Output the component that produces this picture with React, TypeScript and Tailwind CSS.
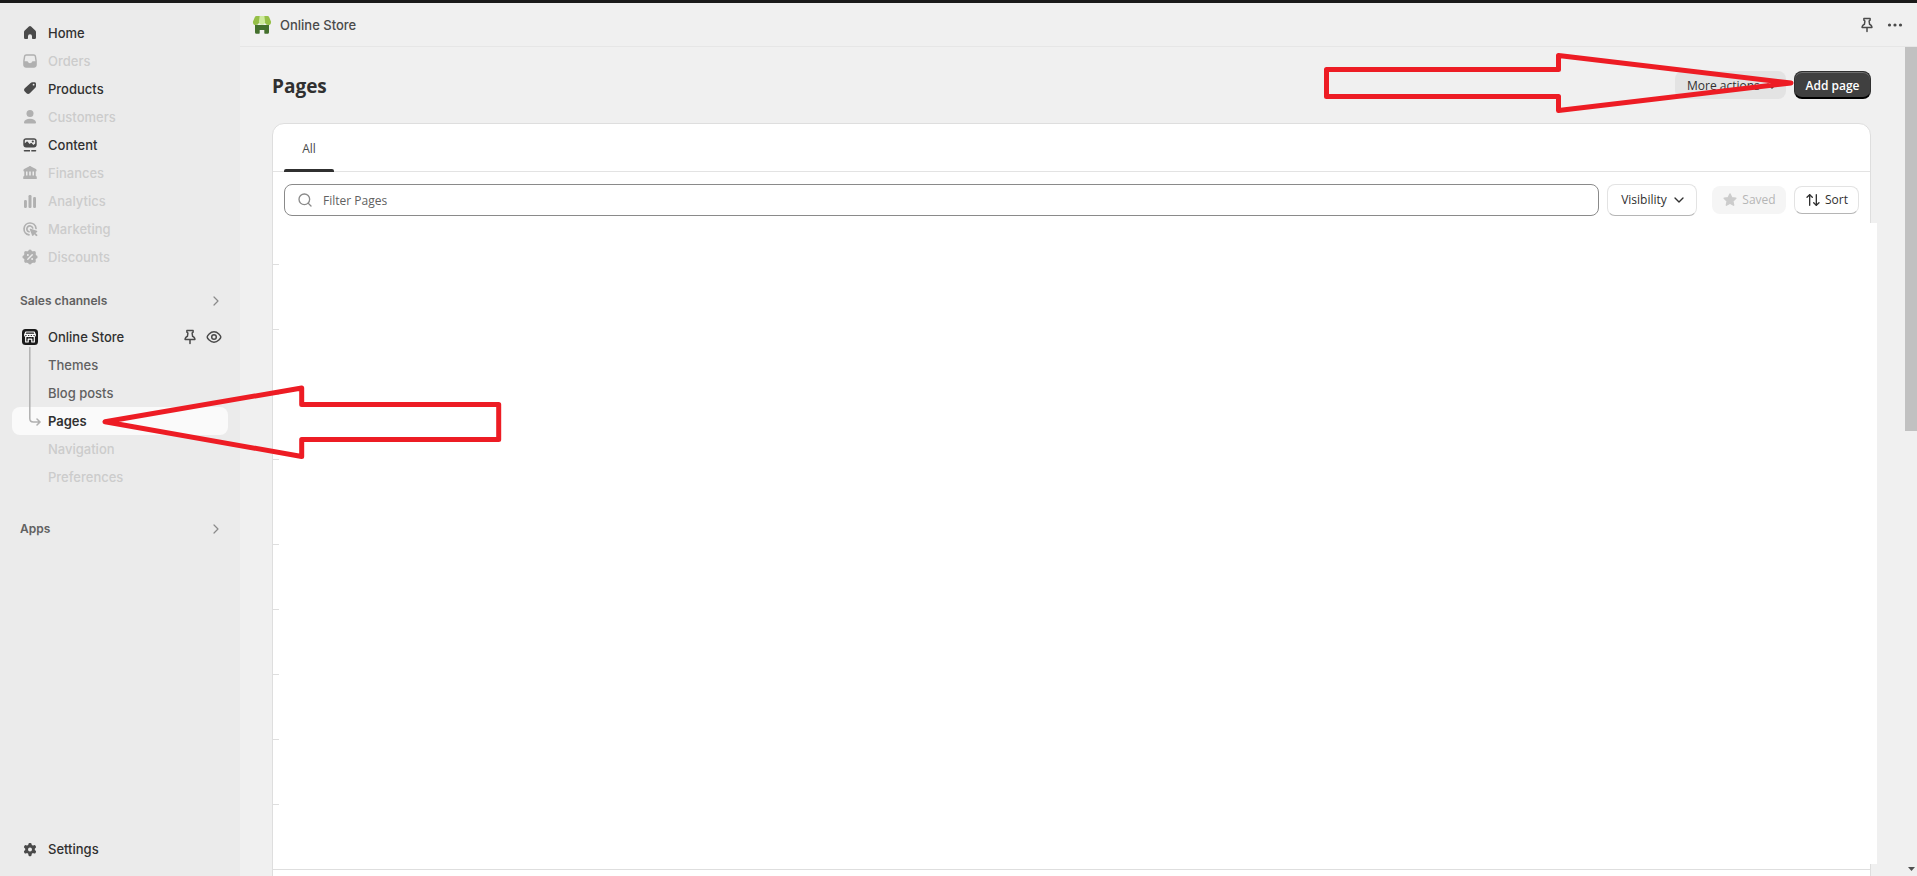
import type { ReactNode } from 'react'
import { ArrowDownUp, ChevronDown, ChevronRight, Search } from 'lucide-react'

interface NavItem {
  label: string
  icon: ReactNode
  disabled?: boolean
}

function Icon({ children, className = '' }: { children: ReactNode; className?: string }) {
  return (
    <svg viewBox="0 0 20 20" width="20" height="20" fill="currentColor" className={`shrink-0 ${className}`} aria-hidden="true">
      {children}
    </svg>
  )
}

function PinIcon() {
  return (
    <Icon>
      <g fill="none" stroke="currentColor" strokeWidth="1.5" strokeLinecap="round" strokeLinejoin="round">
        <path d="M6.9 3.6h6.2v1.6l-1 .8.5 3.4c1.5.5 2.3 1.5 2.3 3.1H5.1c0-1.600.8-2.600 2.300-3.100l.5-3.400-1-.8z" />
        <path d="M10 12.800v3.700" />
      </g>
    </Icon>
  )
}

const principal: NavItem[] = [
  {
    label: 'Home',
    icon: <path d="M8.9 3.500a1.600 1.600 0 0 1 2.200 0l4.200 3.900c.5.500.7 1 .7 1.600v5.400c0 1-.7 1.700-1.700 1.700h-1.500c-.5 0-.8-.3-.8-.8v-2a2 2 0 0 0-4 0v2c0 .5-.3.8-.8.8H5.700c-1 0-1.700-.7-1.700-1.700V9c0-.6.200-1.100.7-1.600z" />,
  },
  {
    label: 'Orders',
    disabled: true,
    icon: (
      <path
        fillRule="evenodd"
        d="M6.300 3.300h7.400c1.300 0 2.200.8 2.400 2l.7 4.500v4c0 1.700-1.100 2.900-2.900 2.900H6.100c-1.800 0-2.900-1.200-2.900-2.900v-4l.7-4.500c.2-1.200 1.100-2 2.400-2zm0 1.500c-.6 0-.9.3-1 .8l-.7 4.600h2.500c.6 0 .9.3 1.100.8.3.800.8 1.200 1.800 1.200s1.500-.4 1.800-1.200c.2-.5.5-.8 1.100-.8h2.500l-.7-4.600c-.1-.5-.4-.8-1-.8z"
      />
    ),
  },
  {
    label: 'Products',
    icon: (
      <path
        fillRule="evenodd"
        d="M10.600 4c.5-.5 1-.7 1.700-.7h2.200c.9 0 1.500.6 1.500 1.500V7c0 .7-.2 1.200-.7 1.700l-5.500 5.600c-1 1-2.300 1-3.300 0l-1.700-1.700c-1-1-1-2.300 0-3.300zM13.600 6.600a.9.9 0 1 0 0-1.800.9.9 0 0 0 0 1.800z"
      />
    ),
  },
  {
    label: 'Customers',
    disabled: true,
    icon: (
      <>
        <circle cx="10" cy="6.500" r="3.500" />
        <path d="M4 15.200C4.300 13 6.800 11.800 10 11.800s5.700 1.200 6 3.400c.1.800-.4 1.400-1.200 1.400H5.200c-.8 0-1.300-.6-1.200-1.400z" />
      </>
    ),
  },
  {
    label: 'Content',
    icon: (
      <>
        <path
          fillRule="evenodd"
          d="M6 3.200h8c1.600 0 2.700 1.100 2.700 2.600v4c0 1.600-1.100 2.700-2.700 2.700H6c-1.600 0-2.700-1.100-2.700-2.700v-4c0-1.500 1.100-2.600 2.700-2.600zm0 1.500c-.7 0-1.200.5-1.200 1.200v2.300l1.500-1.300c.5-.4 1.100-.4 1.600.1L9.600 9l.9-.7c.5-.4 1.100-.3 1.500.1l1.400 1.500 1.800-1.300V5.900c0-.7-.5-1.200-1.200-1.200z"
        />
        <circle cx="12.800" cy="6.500" r="1.100" />
        <path d="M4.500 15h5.500v1.600H4.500a.7.7 0 0 1 0-1.600zM11.300 15h4.200a.7.7 0 0 1 0 1.600h-4.200z" />
      </>
    ),
  },
  {
    label: 'Finances',
    disabled: true,
    icon: (
      <path
        fillRule="evenodd"
        d="M9 3.400c.7-.4 1.300-.4 2 0l4.900 2.500c.9.500 1 2.300-.2 2.600v4.200c.8.300 1.100 1 1.100 1.900v.8c0 .4-.3.700-.7.700H3.900c-.4 0-.7-.3-.7-.7v-.8c0-.9.300-1.600 1.100-1.900V8.500c-1.200-.3-1.100-2.100-.2-2.600zM6 8.500v4h1.500v-4zm3.200 0v4h1.600v-4zm3.300 0v4H14v-4z"
      />
    ),
  },
  {
    label: 'Analytics',
    disabled: true,
    icon: (
      <>
        <rect x="4" y="9" width="2.900" height="8" rx="1.200" />
        <rect x="8.500" y="4" width="3" height="13" rx="1.200" />
        <rect x="13.100" y="6" width="2.900" height="11" rx="1.200" />
      </>
    ),
  },
  {
    label: 'Marketing',
    disabled: true,
    icon: (
      <>
        <g fill="none" stroke="currentColor" strokeWidth="1.700" strokeLinecap="round">
          <path d="M16 9.300A6 6 0 1 0 9 15.900" />
          <path d="M12.700 9A3 3 0 1 0 9 12.800" />
        </g>
        <path d="M9.800 10.600c-.2-.6.300-1.100.9-.9l6 2c.8.300.8 1.200.1 1.500l-1.300.7 1.800 1.800c.6.600-.7 1.900-1.300 1.300l-1.800-1.800-.7 1.200c-.4.700-1.300.6-1.500-.1z" />
      </>
    ),
  },
  {
    label: 'Discounts',
    disabled: true,
    icon: (
      <>
        {/* eight rounded lobes around the percent sign */}
        <circle cx="10" cy="10" r="6.300" />
        <circle cx="10" cy="4.200" r="1.800" />
        <circle cx="14.100" cy="5.900" r="1.800" />
        <circle cx="15.800" cy="10" r="1.800" />
        <circle cx="14.100" cy="14.100" r="1.800" />
        <circle cx="10" cy="15.800" r="1.800" />
        <circle cx="5.900" cy="14.100" r="1.800" />
        <circle cx="4.200" cy="10" r="1.800" />
        <circle cx="5.900" cy="5.900" r="1.800" />
        <path d="M7.800 12.200l4.400-4.400" stroke="#ebebeb" strokeWidth="1.400" strokeLinecap="round" />
        <circle cx="7.900" cy="8.100" r="1" fill="#ebebeb" />
        <circle cx="12.100" cy="11.900" r="1" fill="#ebebeb" />
      </>
    ),
  },
]

const subPages = [
  { label: 'Themes', style: 'text-[#616161]' },
  { label: 'Blog posts', style: 'text-[#616161]' },
  { label: 'Pages', style: 'bg-[#fafafa] font-semibold text-[#303030]', current: true },
  { label: 'Navigation', style: 'text-[#cccccc]' },
  { label: 'Preferences', style: 'text-[#cccccc]' },
]

const rowHeights = ['h-[42px]', 'h-[65px]', 'h-[65px]', 'h-[65px]', 'h-[85px]', 'h-[65px]', 'h-[65px]', 'h-[65px]', 'h-[65px]', 'h-[65px]', 'h-[65px]']

function SectionHeading({ children }: { children: ReactNode }) {
  return (
    <button className="flex h-7 w-full items-center justify-between pr-1 pl-2 text-xs font-semibold text-[#616161]">
      {children}
      <ChevronRight size={16} strokeWidth={1.8} className="text-[#8a8a8a]" />
    </button>
  )
}

function Sidebar() {
  return (
    <nav className="flex w-60 shrink-0 flex-col bg-[#ebebeb] px-3 pt-4 pb-3 text-[13px] font-[450] text-[#303030]">
      <ul>
        {principal.map((item) => (
          <li key={item.label}>
            <a
              href="#"
              className={`flex h-7 items-center gap-2 pl-2 ${item.disabled ? 'font-medium text-[#cccccc]' : ''}`}
            >
              <Icon className={item.disabled ? 'text-[#b0b0b0]' : 'text-[#4a4a4a]'}>{item.icon}</Icon>
              <span className="pt-0.5">{item.label}</span>
            </a>
          </li>
        ))}
      </ul>

      <div className="mt-4 mb-2">
        <SectionHeading>Sales channels</SectionHeading>
      </div>

      <div className="relative">
        <div className="flex h-7 items-center gap-1 pr-1 pl-2">
          <a href="#" className="flex flex-1 items-center gap-2">
            <Icon>
              <rect x="2" y="2" width="16" height="16" rx="3.500" fill="#1a1a1a" />
              <g fill="none" stroke="#fff" strokeWidth="1.200" strokeLinejoin="round">
                <path d="M5.800 5h8.400l1.200 3c0 2-2.600 2-2.700.2 0 1.900-2.700 1.900-2.700 0 0 1.900-2.700 1.900-2.700 0C7.200 10 4.600 10 4.600 8z" />
                <path d="M4.800 7.400h10.400M5.700 10v5h2.500v-2.800h3.600V15h2.500v-5" />
              </g>
            </Icon>
            <span className="pt-0.5">Online Store</span>
          </a>
          <button aria-label="Unpin" className="text-[#4a4a4a]"><PinIcon /></button>
          <button aria-label="View your online store" className="text-[#4a4a4a]">
            <Icon>
              <g fill="none" stroke="currentColor" strokeWidth="1.500">
                <path d="M3.200 10c0-1.200 2.900-5.200 6.800-5.200s6.800 4 6.800 5.200-2.900 5.200-6.800 5.200S3.200 11.200 3.200 10z" />
                <circle cx="10" cy="10" r="2.300" />
              </g>
            </Icon>
          </button>
        </div>
        <ul>
          {subPages.map((page) => (
            <li key={page.label}>
              <a href="#" aria-current={page.current ? 'page' : undefined} className={`flex h-7 items-center rounded-lg pl-9 ${page.style}`}>
                <span className="pt-0.5">{page.label}</span>
              </a>
            </li>
          ))}
        </ul>
        {/* branch from the channel icon down to the current page */}
        <svg width="14" height="82" viewBox="0 0 14 82" fill="none" stroke="#b0b0b0" strokeWidth="1.500" strokeLinecap="round" className="absolute top-6 left-4" aria-hidden="true">
          <path d="M1.800 0v71.500q0 3.500 3.500 3.500h6.500M9 72l3 3-3 3" />
        </svg>
      </div>

      <div className="mt-6">
        <SectionHeading>Apps</SectionHeading>
      </div>

      <a href="#" className="mt-auto flex h-7 items-center gap-2 pl-2">
        <Icon className="text-[#4a4a4a]">
          <path
            fillRule="evenodd"
            d="M8.500 3.800c.1-.6.500-.9 1.100-.9h.8c.6 0 1 .3 1.100.9l.3 1.100 1.100.7 1.200-.4c.6-.2 1.100 0 1.400.5l.4.700c.3.500.2 1-.2 1.400l-.9.900v1.200l.9.900c.4.400.5.900.2 1.400l-.4.700c-.3.500-.8.700-1.400.5l-1.200-.4-1.100.7-.3 1.600c-.1.600-.5.900-1.100.9h-.8c-.6 0-1-.3-1.100-.9l-.3-1.600-1.100-.7-1.200.4c-.6.200-1.100 0-1.400-.5l-.4-.7c-.3-.5-.2-1 .2-1.400l.9-.9V8.700l-.9-.9c-.4-.4-.5-.9-.2-1.400l.4-.7c.3-.5.8-.7 1.400-.5l1.200.4 1.100-.7zM10 11.400a2 2 0 1 0 0-4 2 2 0 0 0 0 4z"
          />
        </Icon>
        <span>Settings</span>
      </a>
    </nav>
  )
}

function TopBar() {
  return (
    <header className="flex h-11 shrink-0 items-center gap-2 border-b border-[#e6e6e6] px-3 font-[450]">
      <Icon>
        <path d="M3 10h14v7.300c0 .9-.5 1.500-1.400 1.500h-2.300c-.7 0-1-.3-1-1V15H7.700v2.800c0 .7-.3 1-1 1H4.400c-.9 0-1.400-.6-1.400-1.500z" fill="#44702d" />
        <path d="M4.500 1h11c.8 0 1.400.4 1.700 1.200L19 6.600c.3 2.300-1 3.500-2.800 3.500-1.600 0-2.700-.8-3-2H6.800c-.3 1.200-1.400 2-3 2C2 10.100.7 8.900 1 6.600l1.800-4.400C3.100 1.400 3.700 1 4.500 1z" fill="#95bf47" />
        <path d="M7.600 1h4.800l.7 5.800c0 2-1.300 3-3.100 3s-3.100-1-3.100-3z" fill="#cdea9c" />
      </Icon>
      <span className="pt-0.5 text-[13px] text-[#4a4a4a]">Online Store</span>
      <button aria-label="Pin" className="ml-auto text-[#4a4a4a]"><PinIcon /></button>
      <button aria-label="More" className="text-[#4a4a4a]">
        <Icon>
          <circle cx="4.500" cy="10" r="1.600" />
          <circle cx="10" cy="10" r="1.600" />
          <circle cx="15.500" cy="10" r="1.600" />
        </Icon>
      </button>
    </header>
  )
}

function PagesCard() {
  return (
    <section className="relative rounded-t-xl border border-[#dedede] bg-white">
      <div role="tablist" className="flex h-12 border-b border-[#e3e3e3] px-[11px]">
        <button role="tab" aria-selected="true" className="relative w-[50px] pt-0.5 text-xs font-medium text-[#4a4a4a]">
          All
          <span className="absolute inset-x-0 -bottom-px h-[3px] rounded-t-xs bg-[#303030]" />
        </button>
      </div>

      <div className="flex items-center gap-2 px-[11px] pt-3 pb-[7px]">
        <label className="flex h-8 flex-1 items-center gap-2.5 rounded-lg border border-[#8a8a8a] px-3">
          <Search size={16} strokeWidth={2} className="text-[#8a8a8a]" />
          <input type="text" aria-label="Filter Pages" placeholder="Filter Pages" className="h-7 flex-1 text-xs outline-none placeholder:text-[#616161]" />
        </label>
        <button className="flex h-8 w-[90px] items-center justify-center gap-1 rounded-lg border border-[#e3e3e3] border-b-[#b5b5b5] pl-1 text-xs">
          Visibility
          <ChevronDown size={16} />
        </button>
        <button disabled className="ml-[7px] flex h-7 w-[74px] items-center justify-center gap-1 rounded-lg bg-[#f5f5f5] text-xs text-[#b5b5b5]">
          <svg width="16" height="16" viewBox="0 0 16 16" fill="#cccccc" stroke="#cccccc" strokeWidth="1.500" strokeLinejoin="round" aria-hidden="true">
            <path d="M8 2l1.800 3.800 4 .5-3 2.800.8 4.100L8 11.200l-3.600 2 .8-4.100-3-2.800 4-.5z" />
          </svg>
          Saved
        </button>
        <button className="flex h-7 w-[65px] items-center justify-center gap-1 rounded-lg border border-[#e3e3e3] border-b-[#b5b5b5] text-xs">
          <ArrowDownUp size={16} className="-scale-x-100" />
          Sort
        </button>
      </div>

      <div className="relative">
        {rowHeights.map((height, i) => (
          <div key={i} className={`border-b border-[#dedede] ${height}`} />
        ))}
        <div className="absolute top-0 -right-[7px] left-1.5 h-[641px] bg-white" />
      </div>
    </section>
  )
}

export default function App() {
  return (
    <div className="relative flex h-screen flex-col overflow-hidden border-t-3 border-[#1a1a1a] bg-[#f0f0f0] font-['Inter',sans-serif] text-[#303030]">
      <div className="flex min-h-0 flex-1">
        <Sidebar />
        <div className="flex min-w-0 flex-1 flex-col">
          <TopBar />
          <div className="flex min-h-0 flex-1">
            <main className="min-w-0 flex-1 overflow-hidden pt-6 pr-[34px] pl-8 font-['Open_Sans',sans-serif]">
              <div className="mb-6 flex h-7 items-center gap-2">
                <h1 className="flex-1 pt-0.5 text-[19px] leading-7 font-bold">Pages</h1>
                <button className="flex h-7 w-[111px] items-center gap-1 rounded-lg bg-[#e3e3e3] pt-0.5 pl-3 text-xs">
                  More actions
                  <ChevronDown size={16} />
                </button>
                <button className="h-7 w-[77px] rounded-lg border border-[#303030] border-b-2 border-b-black bg-[#404040] pt-0.5 text-xs font-semibold text-white inset-shadow-[0_1px_0_#707070]">
                  Add page
                </button>
              </div>
              <PagesCard />
            </main>
            <div className="flex w-3 flex-col justify-between">
              <div className="h-[46.3%] bg-[#c1c1c1]" />
              <svg width="12" height="12" viewBox="0 0 12 12" fill="#505050" aria-hidden="true">
                <path d="M3 3h7l-3.500 4z" />
              </svg>
            </div>
          </div>
        </div>
      </div>

      {/* callout arrows */}
      <svg width="402" height="76" viewBox="0 0 402 76" fill="none" stroke="#ed1c24" strokeWidth="5" strokeLinejoin="round" className="pointer-events-none absolute top-[381px] left-[100px]" aria-hidden="true">
        <path d="M5 37.700L201.700 4v16.500h197v35h-197v17z" />
      </svg>
      <svg width="474" height="64" viewBox="0 0 474 64" fill="none" stroke="#ed1c24" strokeWidth="5" strokeLinejoin="round" className="pointer-events-none absolute top-[48px] right-[121px]" aria-hidden="true">
        <path d="M4.500 18.500h232v-14L469 32 236.500 59.500v-14H4.500z" />
      </svg>
    </div>
  )
}
